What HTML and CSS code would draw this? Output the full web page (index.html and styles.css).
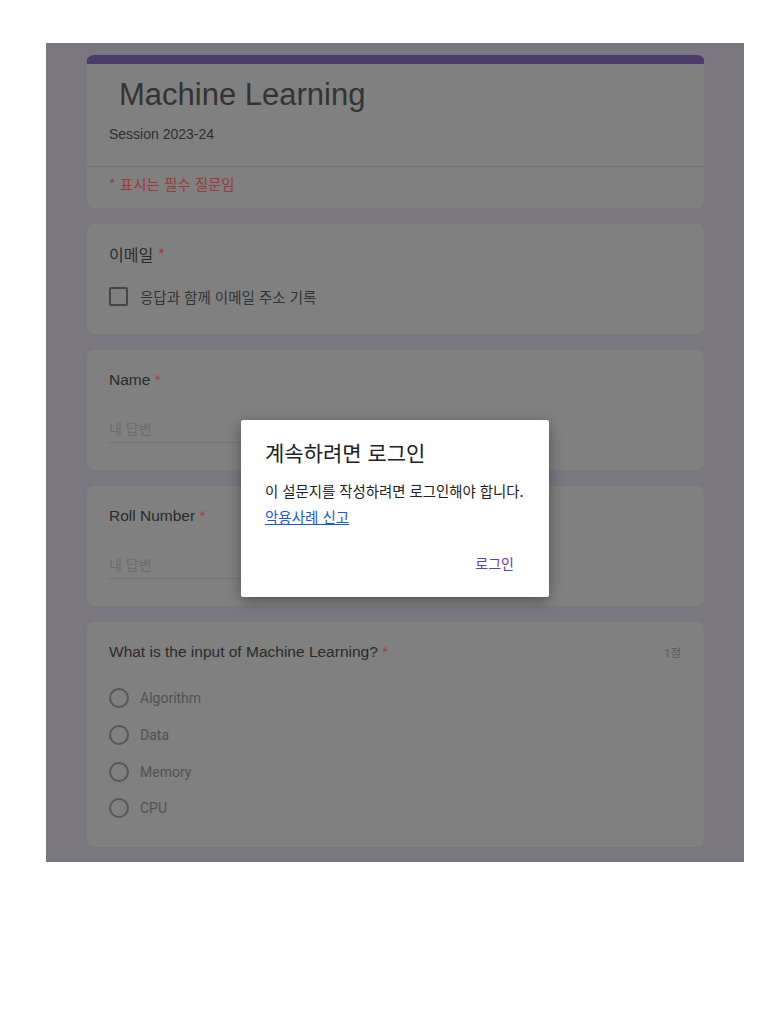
FILE: index.html
```html
<!DOCTYPE html>
<html lang="ko">
<head>
	<meta charset="utf-8">
	<title>Machine Learning</title>
	<link rel="stylesheet" href="styles.css">
</head>
<body>
<div class="sheet">

	<div class="card head-card">
		<h1 class="form-title">Machine Learning</h1>
		<div class="form-desc">Session 2023-24</div>
		<div class="required-note">* 표시는 필수 질문임</div>
	</div>

	<div class="card">
		<div class="q-title ko">이메일 <span class="star">*</span></div>
		<div class="check-row">
			<span class="checkbox"></span>
			<span class="check-label">응답과 함께 이메일 주소 기록</span>
		</div>
	</div>

	<div class="card">
		<div class="q-title">Name <span class="star">*</span></div>
		<div class="answer">내 답변</div>
	</div>

	<div class="card">
		<div class="q-title">Roll Number <span class="star">*</span></div>
		<div class="answer">내 답변</div>
	</div>

	<div class="card">
		<div class="q-head">
			<div class="q-title">What is the input of Machine Learning? <span class="star">*</span></div>
			<div class="points">1점</div>
		</div>
		<ul class="options">
			<li><span class="radio"></span>Algorithm</li>
			<li><span class="radio"></span>Data</li>
			<li><span class="radio"></span>Memory</li>
			<li><span class="radio"></span>CPU</li>
		</ul>
	</div>

	<div class="dialog">
		<h2 class="dialog-title">계속하려면 로그인</h2>
		<p class="dialog-text">이 설문지를 작성하려면 로그인해야 합니다.</p>
		<a class="dialog-link" href="#">악용사례 신고</a>
		<div class="dialog-actions">
			<button class="btn-login">로그인</button>
		</div>
	</div>

</div>
</body>
</html>
```

FILE: styles.css
```css
body {
	margin: 0;
	background: #fff;
	font-family: "Liberation Sans", "Noto Sans CJK KR", sans-serif;
}

.sheet {
	position: relative;
	box-sizing: border-box;
	width: 698px;
	height: 819px;
	margin: 43px 0 0 46px;
	padding: 12px 39px 0 40px;
	background: #7a7781;
	display: flex;
	flex-direction: column;
	gap: 14px;
}

.card {
	background: #808080;
	border: 1px solid #787878;
	border-radius: 8px;
	padding: 18px 23px 0 22px;
}

/* header card */
.head-card {
	border-top: 9px solid #4b3b6d;
	padding: 0;
	height: 144px;
}

.form-title {
	margin: 13px 0 0 32px;
	font-size: 31px;
	line-height: 36px;
	font-weight: normal;
	color: #333;
}

.form-desc {
	margin: 11px 0 0 22px;
	font-size: 14px;
	line-height: 20px;
	color: #2e2e2e;
}

.required-note {
	margin-top: 22px;
	border-top: 1px solid #747474;
	padding: 7px 22px 0;
	font-family: "Noto Sans CJK KR", sans-serif;
	font-size: 14.5px;
	line-height: 20px;
	color: #9a3b3b;
}

/* questions */
.q-title {
	font-size: 15.5px;
	line-height: 24px;
	color: #2a2a2a;
}

.q-title.ko {
	font-family: "Noto Sans CJK KR", sans-serif;
	font-size: 16px;
}

.star {
	color: #a83a3a;
}

.check-row {
	display: flex;
	align-items: center;
	gap: 12px;
	margin-top: 18px;
	height: 24px;
	padding-bottom: 26px;
}

.checkbox {
	box-sizing: border-box;
	width: 19px;
	height: 19px;
	border: 2px solid #464646;
	border-radius: 2px;
}

.check-label {
	font-family: "Noto Sans CJK KR", sans-serif;
	font-size: 14.5px;
	color: #333;
}

.answer {
	width: 286px;
	margin: 26px 0 27px;
	padding-bottom: 4px;
	border-bottom: 1px solid #747474;
	font-family: "Noto Sans CJK KR", sans-serif;
	font-size: 14px;
	line-height: 20px;
	color: #6c6c6c;
}

.q-head {
	display: flex;
	justify-content: space-between;
	align-items: center;
}

.points {
	font-family: Roboto, "Noto Sans CJK KR", sans-serif;
	font-size: 11.5px;
	color: #5a5a5a;
}

.options {
	list-style: none;
	margin: 16px 0 0;
	padding: 0 0 20px;
}

.options li {
	display: flex;
	align-items: center;
	gap: 11px;
	height: 36.7px;
	font-family: Roboto, sans-serif;
	font-size: 14px;
	color: #525252;
}

.radio {
	box-sizing: border-box;
	width: 20px;
	height: 20px;
	border: 2px solid #575757;
	border-radius: 50%;
}

/* sign-in dialog over the dimmed form */
.dialog {
	position: absolute;
	left: 195px;
	top: 377px;
	box-sizing: border-box;
	width: 308px;
	height: 177px;
	padding: 20px 24px 0;
	background: #fff;
	border-radius: 2px;
	box-shadow: 0 4px 14px rgba(0, 0, 0, 0.35);
	font-family: Roboto, "Noto Sans CJK KR", sans-serif;
}

.dialog-title {
	margin: 0;
	font-family: "Noto Sans CJK KR", sans-serif;
	font-size: 21px;
	line-height: 24px;
	font-weight: normal;
	color: #202124;
}

.dialog-text {
	margin: 17px 0 0;
	font-family: "Noto Sans CJK KR", sans-serif;
	font-size: 14.4px;
	line-height: 20px;
	color: #202124;
}

.dialog-link {
	display: inline-block;
	margin-top: 6px;
	font-family: "Noto Sans CJK KR", sans-serif;
	font-size: 14.5px;
	line-height: 20px;
	color: #1a5ad7;
}

.dialog-actions {
	display: flex;
	justify-content: flex-end;
	margin-top: 18px;
	padding-right: 3px;
}

.btn-login {
	border: 0;
	background: none;
	padding: 0 8px;
	height: 36px;
	font-family: "Noto Sans CJK KR", sans-serif;
	font-size: 14px;
	color: #673ab7;
}
```
